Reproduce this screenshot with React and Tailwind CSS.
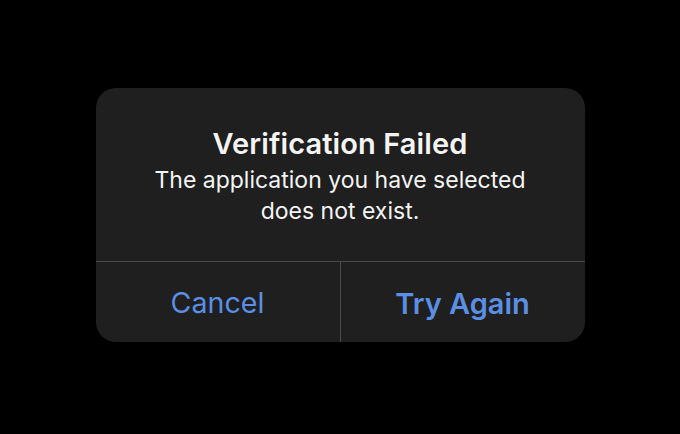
export default function App() {
  return (
    <div
      className="flex h-screen w-full justify-center bg-black pt-[88px]"
      style={{ fontFamily: "Inter, 'Liberation Sans', sans-serif" }}
    >
      <div className="flex h-[254px] w-[489px] flex-col overflow-hidden rounded-[20px] bg-[#1f1f1f]">
        <div className="flex h-[174px] flex-col items-center border-b border-[#4a4a4a] pt-[39px] text-center text-[#f4f4f4]">
          <h1 className="text-[29px] font-semibold leading-[34px] tracking-[0.1px]">
            Verification Failed
          </h1>
          <p className="mt-[4px] text-[23px] leading-[31px]">
            The application you have selected
            <br />
            does not exist.
          </p>
        </div>
        <div className="flex flex-1">
          <button className="flex flex-1 items-center justify-center border-r border-[#4a4a4a] pt-[3px] text-[28.6px] text-[#5a8fe3]">
            Cancel
          </button>
          <button className="flex flex-1 items-center justify-center pt-[3px] text-[29px] font-semibold text-[#5a8fe3]">
            Try Again
          </button>
        </div>
      </div>
    </div>
  );
}
